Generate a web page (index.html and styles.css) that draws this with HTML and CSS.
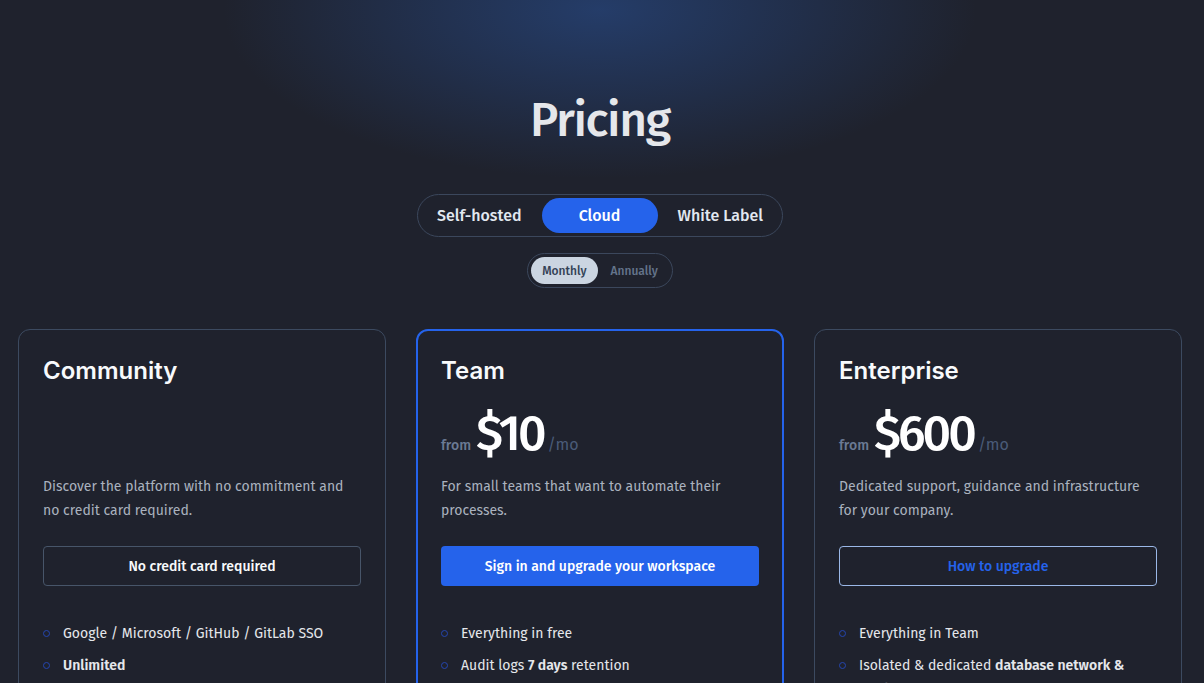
FILE: index.html
```html
<html lang="en">
  <head>
    <meta charset="UTF-8" />
    <meta name="viewport" content="width=device-width, initial-scale=1.0" />
    <title>Pricing</title>
    <link rel="stylesheet" href="styles.css">
  </head>
  <body>
    <div class="glow"></div>
    <main class="page">
      <h1 class="title">Pricing</h1>

      <div class="switch">
        <button class="switch-item">Self-hosted</button>
        <button class="switch-item active">Cloud</button>
        <button class="switch-item">White Label</button>
      </div>

      <div class="period">
        <button class="period-item active">Monthly</button>
        <button class="period-item">Annually</button>
      </div>

      <div class="plans">
        <div class="plan">
          <h2>Community</h2>
          <div class="price empty"></div>
          <p class="desc">Discover the platform with no commitment and no credit card required.</p>
          <a class="btn btn-outline" href="#">No credit card required</a>
          <ul class="features">
            <li>Google / Microsoft / GitHub / GitLab SSO</li>
            <li><b>Unlimited</b></li>
            <li>Workspaces, members and applications</li>
          </ul>
        </div>

        <div class="plan featured">
          <h2>Team</h2>
          <div class="price">
            <span class="from">from</span>
            <span class="amount">$10</span>
            <span class="per">/mo</span>
          </div>
          <p class="desc">For small teams that want to automate their processes.</p>
          <a class="btn btn-primary" href="#">Sign in and upgrade your workspace</a>
          <ul class="features">
            <li>Everything in free</li>
            <li>Audit logs <b>7 days</b> retention</li>
            <li>Priority support</li>
          </ul>
        </div>

        <div class="plan">
          <h2>Enterprise</h2>
          <div class="price">
            <span class="from">from</span>
            <span class="amount">$600</span>
            <span class="per">/mo</span>
          </div>
          <p class="desc">Dedicated support, guidance and infrastructure for your company.</p>
          <a class="btn btn-light" href="#">How to upgrade</a>
          <ul class="features">
            <li>Everything in Team</li>
            <li>Isolated &amp; dedicated <b>database network &amp; workers</b></li>
            <li>Custom domain</li>
          </ul>
        </div>
      </div>
    </main>
  </body>
</html>
```

FILE: styles.css
```css
body {
  font-family: "Fira Sans", Roboto, sans-serif;
  background-color: #1f222d;
  color: #e5e7eb;
  margin: 0;
  overflow: hidden;
  position: relative;
}
.glow {
  position: absolute;
  top: -160px;
  left: 50%;
  width: 760px;
  height: 340px;
  margin-left: -382px;
  background: radial-gradient(ellipse at center, rgba(37, 62, 108, 0.95) 0%, rgba(35, 56, 96, 0.6) 35%, rgba(31, 34, 45, 0) 70%);
  pointer-events: none;
}
.page {
  position: relative;
  display: flex;
  flex-direction: column;
  align-items: center;
  padding-right: 4px;
}
.title {
  margin: 88px 0 0;
  font-size: 48px;
  line-height: 64px;
  font-weight: 500;
  letter-spacing: -0.03em;
  color: #e5e7eb;
}
button {
  font-family: inherit;
  border: none;
  background: none;
  cursor: pointer;
}
.switch {
  margin-top: 42px;
  display: flex;
  align-items: center;
  gap: 4px;
  padding: 3px;
  border: 1px solid #3b475c;
  border-radius: 999px;
}
.switch-item {
  height: 35px;
  padding: 0 16px;
  border-radius: 999px;
  font-size: 16px;
  font-weight: 500;
  color: #e2e8f0;
}
.switch-item.active {
  width: 116px;
  background-color: #2563eb;
  color: #ffffff;
}
.period {
  margin-top: 16px;
  display: flex;
  align-items: center;
  gap: 2px;
  padding: 3px;
  border: 1px solid #3b475c;
  border-radius: 999px;
}
.period-item {
  height: 27px;
  padding: 0 11px;
  border-radius: 999px;
  font-size: 12px;
  font-weight: 500;
  color: #64748b;
}
.period-item.active {
  background-color: #cbd5e1;
  color: #334155;
}
.plans {
  margin-top: 41px;
  align-self: stretch;
  display: grid;
  grid-template-columns: repeat(3, minmax(0, 1fr));
  gap: 30px;
  padding: 0 18px;
}
.plan {
  border: 1px solid #3c4a60;
  border-radius: 12px;
  padding: 25px 24px 24px;
  min-height: 400px;
}
.plan.featured {
  border: 2px solid #2563eb;
  padding: 24px 23px 23px;
}
.plan h2 {
  margin: 0;
  font-family: Inter, sans-serif;
  font-size: 24px;
  line-height: 32px;
  font-weight: 600;
  color: #f8fafc;
}
.price {
  display: flex;
  align-items: baseline;
  height: 70px;
  margin-top: 11px;
}
.from {
  font-size: 14px;
  font-weight: 500;
  color: #6b7a94;
  margin-right: 5px;
}
.amount {
  font-size: 50px;
  line-height: 70px;
  font-weight: 500;
  letter-spacing: -0.06em;
  color: #ffffff;
}
.per {
  font-size: 16px;
  color: #4a5b78;
  margin-left: 4px;
}
.desc {
  margin: 7px 0 0;
  font-size: 14px;
  line-height: 24px;
  color: #aab2bf;
}
.btn {
  display: flex;
  align-items: center;
  justify-content: center;
  height: 40px;
  margin-top: 23px;
  border-radius: 4px;
  box-sizing: border-box;
  font-size: 14px;
  font-weight: 500;
  text-decoration: none;
}
.btn-outline {
  border: 1px solid #475569;
  color: #f8fafc;
}
.btn-primary {
  background-color: #2563eb;
  color: #ffffff;
}
.btn-light {
  border: 1px solid #9bb8e8;
  color: #2563eb;
}
.features {
  list-style: none;
  margin: 36px 0 0;
  padding: 0;
  display: grid;
  gap: 8px;
}
.features li {
  padding-left: 21px;
  text-indent: -21px;
  font-size: 14px;
  line-height: 24px;
  color: #e5e7eb;
}
.features li::before {
  content: "";
  display: inline-block;
  width: 5px;
  height: 5px;
  border: 1.5px solid #2546b0;
  border-radius: 50%;
  margin-right: 13px;
  vertical-align: 1px;
}
.features b {
  font-weight: 600;
}
```
